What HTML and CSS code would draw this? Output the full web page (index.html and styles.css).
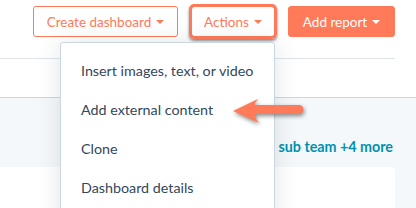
FILE: index.html
```html
<!DOCTYPE html>
<html lang="en">
<head>
<meta charset="utf-8">
<link rel="stylesheet" href="styles.css">
</head>
<body>
<div class="page">
  <header class="toolbar">
    <button class="btn btn-outline btn-create">Create dashboard <span class="caret"></span></button>
    <button class="btn btn-outline btn-actions">Actions <span class="caret"></span></button>
    <button class="btn btn-primary btn-report">Add report <span class="caret"></span></button>
  </header>
  <div class="subbar"></div>
  <section class="content">
    <div class="filters"><span class="team-link">sub team +4 more</span></div>
    <div class="card"></div>
  </section>

  <ul class="menu">
    <li class="menu-item">Insert images, text, or video</li>
    <li class="menu-item">Add external content</li>
    <li class="menu-item">Clone</li>
    <li class="menu-item">Dashboard details</li>
  </ul>

  <svg class="pointer" width="80" height="32" viewBox="0 0 80 32">
    <path d="M3,15 L28,3 Q24.5,7 25,9 L69,9 A4.5,4.5 0 0 1 69,18 L25,18 Q24.5,22 29,27 Z" fill="#ff7a59"/>
  </svg>
</div>
</body>
</html>
```

FILE: styles.css
```css
* { box-sizing: border-box; }
html, body { margin: 0; padding: 0; background: #fff; }
body {
  font-family: Lato, "Open Sans", "Liberation Sans", sans-serif;
  color: #33475b;
  width: 416px;
  height: 208px;
  overflow: hidden;
}
.page { position: relative; width: 416px; height: 208px; overflow: hidden; }

.toolbar {
  display: flex;
  justify-content: flex-end;
  align-items: flex-start;
  gap: 13px;
  height: 59px;
  padding-top: 6px;
  margin-right: 21px;
  border-bottom: 1px solid #dfe3eb;
}
.btn {
  font-family: inherit;
  font-size: 13.5px;
  height: 31px;
  border-radius: 3px;
  padding: 0;
  display: flex;
  align-items: center;
  justify-content: center;
  gap: 5px;
  cursor: pointer;
  position: relative;
}
.btn-create { width: 145px; }
.btn-actions { width: 84px; }
.btn-report { width: 107px; }
.btn-outline { background: #fff; color: #ff7a59; border: 1px solid #ff7a59; }
.btn-primary { background: #ff7a59; color: #fff; border: 1px solid #ff7a59; }
.btn-actions::after {
  content: "";
  position: absolute;
  left: -3px; right: -3px; top: -3px; bottom: -3px;
  border: 3px solid #ff7a59;
  border-radius: 5px;
  box-shadow: 0 2px 3px rgba(0,0,0,0.45);
}
.caret {
  width: 0; height: 0;
  border-left: 4px solid transparent;
  border-right: 4px solid transparent;
  border-top: 4px solid currentColor;
  margin-top: 1px;
}

.subbar { height: 39px; border-bottom: 1px solid #cbd6e2; }

.content { background: #f5f8fa; height: 120px; }
.filters {
  height: 69px;
  display: flex;
  justify-content: flex-end;
  align-items: flex-end;
  padding-right: 23px;
  padding-bottom: 12px;
}
.team-link { color: #0091ae; font-weight: 700; font-size: 14.3px; }
.card {
  height: 60px;
  margin-right: 21px;
  background: #fff;
  border-radius: 0 4px 0 0;
}

.menu {
  position: absolute;
  left: 60px; top: 42px;
  width: 215px; height: 190px;
  margin: 0;
  padding: 8px 0 0;
  list-style: none;
  background: #fff;
  border: 1px solid #cbd6e2;
  border-radius: 3px;
  box-shadow: 0 1px 24px rgba(45,62,80,0.14);
}
.menu-item {
  height: 39px;
  display: flex;
  align-items: center;
  padding-left: 20px;
  font-size: 14.3px;
  color: #33475b;
  white-space: nowrap;
}

.pointer {
  position: absolute;
  left: 230px; top: 96px;
  filter: drop-shadow(1px 2px 2px rgba(0,0,0,0.45));
}
```
